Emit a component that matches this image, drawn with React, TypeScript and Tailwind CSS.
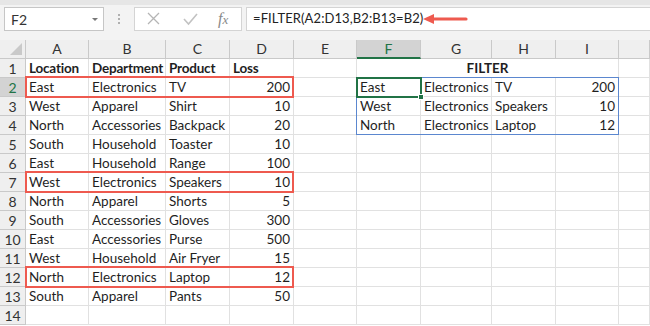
import { Fragment } from 'react';

const cols = ['A', 'B', 'C', 'D', 'E', 'F', 'G', 'H', 'I', 'J'];

type Row = (string | number)[];

const data: Row[] = [
  ['Location', 'Department', 'Product', 'Loss'],
  ['East', 'Electronics', 'TV', 200],
  ['West', 'Apparel', 'Shirt', 10],
  ['North', 'Accessories', 'Backpack', 20],
  ['South', 'Household', 'Toaster', 10],
  ['East', 'Household', 'Range', 100],
  ['West', 'Electronics', 'Speakers', 10],
  ['North', 'Apparel', 'Shorts', 5],
  ['South', 'Accessories', 'Gloves', 300],
  ['East', 'Accessories', 'Purse', 500],
  ['West', 'Household', 'Air Fryer', 15],
  ['North', 'Electronics', 'Laptop', 12],
  ['South', 'Apparel', 'Pants', 50],
  [],
];

const filtered: Row[] = [
  ['East', 'Electronics', 'TV', 200],
  ['West', 'Electronics', 'Speakers', 10],
  ['North', 'Electronics', 'Laptop', 12],
];

function Cell({ value, bold }: { value?: string | number; bold?: boolean }) {
  const isNum = typeof value === 'number';
  return (
    <div
      className={`h-[19px] border-r border-b border-[#e1e1e1] px-[3px] leading-[19px] whitespace-nowrap ${
        isNum ? 'text-right' : 'text-left'
      } ${bold ? 'font-bold tracking-[-0.2px]' : ''}`}
    >
      {value ?? ''}
    </div>
  );
}

export default function App() {
  return (
    <div
      className="w-[650px] h-[326px] overflow-hidden bg-white text-[13.5px] text-[#1f1f1f]"
      style={{ fontFamily: 'Lato, "Liberation Sans", sans-serif' }}
    >
      {/* formula bar */}
      <div className="h-[40px] bg-[#f3f3f3] border-t-[5px] border-[#e6e6e6] pt-[2px] flex items-start">
        <div className="ml-[4px] w-[100px] h-[24px] bg-white border border-[#c6c6c6] flex items-center justify-between pl-[6px] pr-[5px]">
          <span className="text-[14px] text-[#333]">F2</span>
          <span className="w-0 h-0 border-l-[3px] border-r-[3px] border-t-[3px] border-l-transparent border-r-transparent border-t-[#777]" />
        </div>
        <div className="w-[30px] h-[24px] flex flex-col items-center justify-center gap-[2px]">
          <span className="w-[2px] h-[2px] bg-[#b0b0b0]" />
          <span className="w-[2px] h-[2px] bg-[#b0b0b0]" />
          <span className="w-[2px] h-[2px] bg-[#b0b0b0]" />
        </div>
        <div className="w-[108px] h-[24px] bg-white border border-[#d4d4d4] flex items-center">
          <svg width="36" height="22" viewBox="0 0 36 22" className="ml-[1px]">
            <path d="M12 5 L23 16 M23 5 L12 16" stroke="#b5b5b5" strokeWidth="1.3" fill="none" />
          </svg>
          <svg width="36" height="22" viewBox="0 0 36 22">
            <path d="M12 11 L16.5 16 L25 6" stroke="#c2c2c2" strokeWidth="1.6" fill="none" />
          </svg>
          <span
            className="ml-[10px] italic text-[16px] text-[#8a8a8a]"
            style={{ fontFamily: '"Liberation Serif", serif' }}
          >
            f<span className="text-[13px]">x</span>
          </span>
        </div>
        <div className="relative ml-[4px] flex-1 h-[24px] bg-white border-y border-l border-[#d4d4d4] flex items-center pl-[6px]">
          <span className="text-[13px] text-[#222] tracking-[0.1px]">=FILTER(A2:D13,B2:B13=B2)</span>
          <svg
            width="48"
            height="12"
            viewBox="0 0 48 12"
            className="absolute left-[174px] top-[5px]"
          >
            <path d="M2 6 L13 1 L13 11 Z" fill="#ee5a4f" />
            <path d="M11 6 L45 6" stroke="#ee5a4f" strokeWidth="3.2" strokeLinecap="round" />
          </svg>
        </div>
      </div>

      {/* sheet */}
      <div className="relative">
        <div className="grid grid-cols-[26px_63px_77px_64px_64px_63px_64px_71px_64px_63px_1fr]">
          {/* column headers */}
          <div className="h-[19px] bg-[#efefef] border-r border-b border-[#c9c9c9] relative">
            <svg width="12" height="12" viewBox="0 0 12 12" className="absolute right-[3px] bottom-[3px]">
              <path d="M12 0 L12 12 L0 12 Z" fill="#c9c9c9" />
            </svg>
          </div>
          {cols.map((c) =>
            c === 'F' ? (
              <div
                key={c}
                className="h-[19px] bg-[#d3d3d3] border-r border-[#c9c9c9] border-b-2 border-b-[#217346] text-center leading-[18px] text-[#217346] text-[14px]"
              >
                {c}
              </div>
            ) : (
              <div
                key={c}
                className="h-[19px] bg-[#efefef] border-r border-b border-[#c9c9c9] text-center leading-[18px] text-[#333] text-[14px]"
              >
                {c === 'J' ? '' : c}
              </div>
            )
          )}

          {data.map((row, i) => {
            const n = i + 1;
            const f = filtered[i - 1];
            return (
              <Fragment key={n}>
                <div
                  className={`h-[19px] border-r border-b border-[#c9c9c9] text-center leading-[19px] text-[14px] ${
                    n === 2 ? 'bg-[#d3d3d3] text-[#217346]' : 'bg-[#efefef] text-[#333]'
                  }`}
                >
                  {n}
                </div>
                <Cell value={row[0]} bold={n === 1} />
                <Cell value={row[1]} bold={n === 1} />
                <Cell value={row[2]} bold={n === 1} />
                <Cell value={row[3]} bold={n === 1} />
                <Cell />
                {n === 1 ? (
                  <div className="col-span-4 h-[19px] border-r border-b border-[#e1e1e1] text-center font-bold leading-[19px]">
                    FILTER
                  </div>
                ) : (
                  <>
                    <Cell value={f?.[0]} />
                    <Cell value={f?.[1]} />
                    <Cell value={f?.[2]} />
                    <Cell value={f?.[3]} />
                  </>
                )}
                <Cell />
              </Fragment>
            );
          })}
        </div>

        {/* highlight boxes */}
        <div className="absolute left-[25px] top-[36px] w-[269px] h-[22px] border-2 border-[#ee5a4f]" />
        <div className="absolute left-[25px] top-[131px] w-[269px] h-[22px] border-2 border-[#ee5a4f]" />
        <div className="absolute left-[25px] top-[226px] w-[269px] h-[22px] border-2 border-[#ee5a4f]" />

        {/* spill range */}
        <div className="absolute left-[356px] top-[37px] w-[263px] h-[58px] border border-[#5b87cf]" />
        {/* active cell */}
        <div className="absolute left-[356px] top-[37px] w-[66px] h-[21px] border-2 border-[#217346]" />
        <div className="absolute left-[418px] top-[54px] w-[6px] h-[6px] bg-[#217346] border border-white" />
      </div>
    </div>
  );
}
